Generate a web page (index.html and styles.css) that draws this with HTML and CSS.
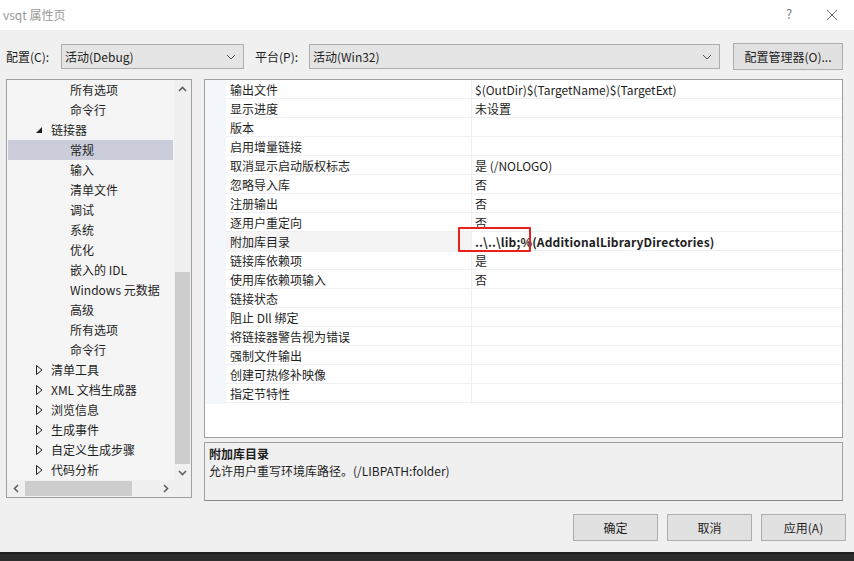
FILE: index.html
```html
<!DOCTYPE html>
<html lang="zh-CN">
<head>
    <meta charset="UTF-8">
    <title>vsqt 属性页</title>
    <link rel="stylesheet" href="styles.css">
</head>
<body>
    <div class="titlebar">
        <span class="title">vsqt 属性页</span>
        <span class="title-help">?</span>
        <span class="title-close">
            <svg width="12" height="12" viewBox="0 0 12 12"><path d="M1 1L11 11M11 1L1 11" stroke="#6e6e6e" stroke-width="1"/></svg>
        </span>
    </div>

    <div class="dialog">
        <div class="toolbar">
            <span class="label">配置(C):</span>
            <div class="combo combo-config">
                <span>活动(Debug)</span>
                <svg class="chev" width="10" height="6" viewBox="0 0 10 6"><path d="M1 1L5 5L9 1" fill="none" stroke="#555" stroke-width="1"/></svg>
            </div>
            <span class="label label-platform">平台(P):</span>
            <div class="combo combo-platform">
                <span>活动(Win32)</span>
                <svg class="chev" width="10" height="6" viewBox="0 0 10 6"><path d="M1 1L5 5L9 1" fill="none" stroke="#555" stroke-width="1"/></svg>
            </div>
            <button class="btn btn-manager">配置管理器(O)...</button>
        </div>

        <div class="main">
            <!-- 左侧属性树 -->
            <div class="tree">
                <div class="tree-top">
                    <ul class="tree-list">
                        <li class="lv2">所有选项</li>
                        <li class="lv2">命令行</li>
                        <li class="lv1"><span class="toggle"><svg width="7" height="7" viewBox="0 0 7 7"><path d="M6 0V6H0Z" fill="#1e1e1e"/></svg></span>链接器</li>
                        <li class="lv2 selected">常规</li>
                        <li class="lv2">输入</li>
                        <li class="lv2">清单文件</li>
                        <li class="lv2">调试</li>
                        <li class="lv2">系统</li>
                        <li class="lv2">优化</li>
                        <li class="lv2">嵌入的 IDL</li>
                        <li class="lv2">Windows 元数据</li>
                        <li class="lv2">高级</li>
                        <li class="lv2">所有选项</li>
                        <li class="lv2">命令行</li>
                        <li class="lv1"><span class="toggle"><svg width="7" height="10" viewBox="0 0 7 10"><path d="M0.5 0.5L6 5L0.5 9.5Z" fill="none" stroke="#1e1e1e"/></svg></span>清单工具</li>
                        <li class="lv1"><span class="toggle"><svg width="7" height="10" viewBox="0 0 7 10"><path d="M0.5 0.5L6 5L0.5 9.5Z" fill="none" stroke="#1e1e1e"/></svg></span>XML 文档生成器</li>
                        <li class="lv1"><span class="toggle"><svg width="7" height="10" viewBox="0 0 7 10"><path d="M0.5 0.5L6 5L0.5 9.5Z" fill="none" stroke="#1e1e1e"/></svg></span>浏览信息</li>
                        <li class="lv1"><span class="toggle"><svg width="7" height="10" viewBox="0 0 7 10"><path d="M0.5 0.5L6 5L0.5 9.5Z" fill="none" stroke="#1e1e1e"/></svg></span>生成事件</li>
                        <li class="lv1"><span class="toggle"><svg width="7" height="10" viewBox="0 0 7 10"><path d="M0.5 0.5L6 5L0.5 9.5Z" fill="none" stroke="#1e1e1e"/></svg></span>自定义生成步骤</li>
                        <li class="lv1"><span class="toggle"><svg width="7" height="10" viewBox="0 0 7 10"><path d="M0.5 0.5L6 5L0.5 9.5Z" fill="none" stroke="#1e1e1e"/></svg></span>代码分析</li>
                    </ul>
                    <div class="vscroll">
                        <div class="sb-btn"><svg width="9" height="6" viewBox="0 0 9 6"><path d="M1 5L4.5 1.5L8 5" fill="none" stroke="#606060" stroke-width="1.6"/></svg></div>
                        <div class="sb-track"><div class="vthumb"></div></div>
                        <div class="sb-btn"><svg width="9" height="6" viewBox="0 0 9 6"><path d="M1 1L4.5 4.5L8 1" fill="none" stroke="#606060" stroke-width="1.6"/></svg></div>
                    </div>
                </div>
                <div class="tree-bottom">
                    <div class="hscroll">
                        <div class="sb-btn"><svg width="6" height="9" viewBox="0 0 6 9"><path d="M5 1L1.5 4.5L5 8" fill="none" stroke="#606060" stroke-width="1.6"/></svg></div>
                        <div class="sb-track"><div class="hthumb"></div></div>
                        <div class="sb-btn"><svg width="6" height="9" viewBox="0 0 6 9"><path d="M1 1L4.5 4.5L1 8" fill="none" stroke="#606060" stroke-width="1.6"/></svg></div>
                    </div>
                    <div class="sb-corner"></div>
                </div>
            </div>

            <div class="right">
                <!-- 属性表格 -->
                <div class="grid">
                    <div class="row"><span class="gutter"></span><span class="name">输出文件</span><span class="value">$(OutDir)$(TargetName)$(TargetExt)</span></div>
                    <div class="row"><span class="gutter"></span><span class="name">显示进度</span><span class="value">未设置</span></div>
                    <div class="row"><span class="gutter"></span><span class="name">版本</span><span class="value"></span></div>
                    <div class="row"><span class="gutter"></span><span class="name">启用增量链接</span><span class="value"></span></div>
                    <div class="row"><span class="gutter"></span><span class="name">取消显示启动版权标志</span><span class="value">是 (/NOLOGO)</span></div>
                    <div class="row"><span class="gutter"></span><span class="name">忽略导入库</span><span class="value">否</span></div>
                    <div class="row"><span class="gutter"></span><span class="name">注册输出</span><span class="value">否</span></div>
                    <div class="row"><span class="gutter"></span><span class="name">逐用户重定向</span><span class="value">否</span></div>
                    <div class="row current"><span class="gutter"></span><span class="name">附加库目录</span><span class="value bold">..\..\lib;%(AdditionalLibraryDirectories)<span class="mark"></span></span></div>
                    <div class="row"><span class="gutter"></span><span class="name">链接库依赖项</span><span class="value">是</span></div>
                    <div class="row"><span class="gutter"></span><span class="name">使用库依赖项输入</span><span class="value">否</span></div>
                    <div class="row"><span class="gutter"></span><span class="name">链接状态</span><span class="value"></span></div>
                    <div class="row"><span class="gutter"></span><span class="name">阻止 Dll 绑定</span><span class="value"></span></div>
                    <div class="row"><span class="gutter"></span><span class="name">将链接器警告视为错误</span><span class="value"></span></div>
                    <div class="row"><span class="gutter"></span><span class="name">强制文件输出</span><span class="value"></span></div>
                    <div class="row"><span class="gutter"></span><span class="name">创建可热修补映像</span><span class="value"></span></div>
                    <div class="row"><span class="gutter"></span><span class="name">指定节特性</span><span class="value"></span></div>
                </div>

                <div class="desc">
                    <div class="desc-title">附加库目录</div>
                    <div class="desc-text">允许用户重写环境库路径。(/LIBPATH:folder)</div>
                </div>
            </div>
        </div>

        <div class="actions">
            <button class="btn">确定</button>
            <button class="btn">取消</button>
            <button class="btn">应用(A)</button>
        </div>
    </div>

    <div class="taskbar"></div>
</body>
</html>
```

FILE: styles.css
```css
* {
    box-sizing: border-box;
}

body {
    margin: 0;
    width: 854px;
    height: 561px;
    overflow: hidden;
    background-color: #f0f0f0;
    font-family: "Noto Sans CJK SC", "Noto Sans", sans-serif;
    font-size: 12px;
    color: #1e1e1e;
}

/* 标题栏 */
.titlebar {
    height: 30px;
    background-color: #fff;
    display: flex;
    align-items: center;
    padding-left: 3px;
}

.title {
    color: #999;
    flex: 1;
    margin-top: -2px;
}

.title-help {
    color: #777;
    width: 40px;
    font-size: 13px;
    margin-top: -3px;
}

.title-close {
    width: 28px;
    display: flex;
    margin-top: -1px;
}

/* 对话框主体 */
.dialog {
    height: 522px;
    display: flex;
    flex-direction: column;
}

.toolbar {
    display: flex;
    align-items: center;
    height: 27px;
    margin-top: 13px;
    padding-left: 6px;
}

.label {
    width: 55px;
}

.label-platform {
    margin-left: 11px;
    width: 54px;
}

.combo {
    height: 25px;
    background-color: #e5e5e5;
    border: 1px solid #adadad;
    display: flex;
    align-items: center;
    justify-content: space-between;
    padding: 0 7px 0 3px;
}

.combo-config {
    width: 183px;
}

.combo-platform {
    width: 411px;
}

.btn {
    font-family: inherit;
    font-size: 12px;
    color: #1e1e1e;
    background-color: #e1e1e1;
    border: 1px solid #adadad;
    height: 27px;
    padding: 0;
}

.btn-manager {
    width: 110px;
    margin-left: 13px;
}

.main {
    display: flex;
    margin-top: 9px;
    padding-left: 6px;
    height: 422px;
}

/* 左侧树 */
.tree {
    width: 186px;
    height: 419px;
    border: 1px solid #a0a0a0;
    background-color: #f5f5f5;
    display: flex;
    flex-direction: column;
}

.tree-top {
    display: flex;
    height: 400px;
}

.tree-list {
    list-style: none;
    margin: 0;
    padding: 0;
    width: 167px;
}

.tree-list li {
    height: 20px;
    line-height: 20px;
    white-space: nowrap;
    display: flex;
    align-items: center;
}

.tree-list .lv1 {
    padding-left: 29px;
}

.tree-list .lv2 {
    padding-left: 63px;
}

.tree-list .selected {
    background-color: #cbcdda;
    margin: 0 1px;
    padding-left: 62px;
}

.toggle {
    width: 15px;
    display: flex;
    align-items: center;
}

.vscroll {
    width: 17px;
    display: flex;
    flex-direction: column;
    background-color: #f0f0f0;
}

.sb-btn {
    width: 17px;
    height: 17px;
    display: flex;
    align-items: center;
    justify-content: center;
    flex-shrink: 0;
}

.sb-track {
    flex: 1;
    display: flex;
}

.vthumb {
    width: 15px;
    height: 192px;
    margin: 175px 0 0 1px;
    background-color: #cdcdcd;
}

.tree-bottom {
    display: flex;
    height: 17px;
}

.hscroll {
    width: 167px;
    display: flex;
    background-color: #f0f0f0;
}

.hthumb {
    width: 107px;
    height: 15px;
    margin: 1px 0 0 1px;
    background-color: #cdcdcd;
}

.sb-corner {
    width: 17px;
    background-color: #f0f0f0;
}

/* 右侧属性表 */
.right {
    margin-left: 12px;
    width: 639px;
    display: flex;
    flex-direction: column;
}

.grid {
    height: 359px;
    border: 1px solid #a0a0a0;
    background-color: #fff;
}

.row {
    display: grid;
    grid-template-columns: 21px 246px 1fr;
    height: 19px;
    line-height: 20px;
    border-bottom: 1px solid #eef0f3;
}

.gutter {
    background-color: #f3f6fb;
}

.name {
    padding-left: 4px;
    border-right: 1px solid #eef0f3;
}

.current .name {
    background-color: #f4f4f4;
}

.value {
    padding-left: 3px;
    white-space: nowrap;
    position: relative;
}

.bold {
    font-weight: bold;
    letter-spacing: 0.15px;
}

/* 红色标注框 */
.mark {
    position: absolute;
    left: -14px;
    top: -5px;
    width: 73px;
    height: 25px;
    border: 2px solid #e8211d;
    border-radius: 1px;
}

.desc {
    margin-top: 4px;
    height: 59px;
    border: 1px solid #a0a0a0;
    border-bottom-color: #8c8c8c;
    padding: 2px 0 0 4px;
    line-height: 17px;
}

.desc-title {
    font-weight: bold;
}

.actions {
    display: flex;
    justify-content: flex-end;
    gap: 9px;
    margin-top: 13px;
    padding-right: 8px;
}

.actions .btn {
    width: 85px;
}

.taskbar {
    height: 9px;
    background-color: #2d2d2d;
    border-top: 2px solid #1f1f1f;
}
```
